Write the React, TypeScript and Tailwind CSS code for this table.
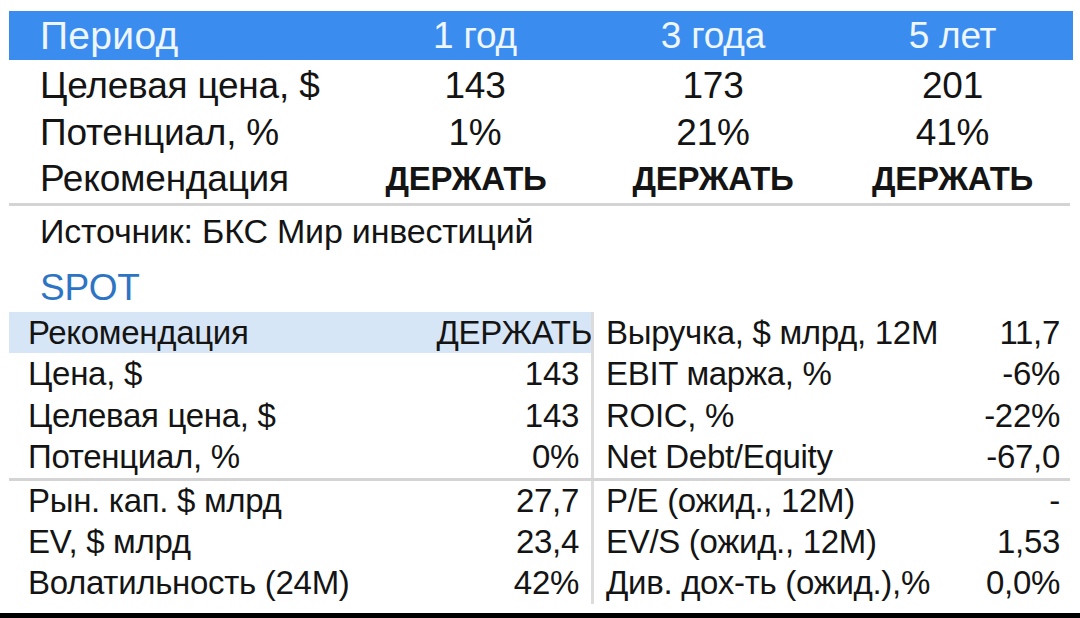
const top = [
  ['Целевая цена, $', '143', '173', '201'],
  ['Потенциал, %', '1%', '21%', '41%'],
];

const upperLeft = [
  ['Цена, $', '143'],
  ['Целевая цена, $', '143'],
  ['Потенциал, %', '0%'],
];

const upperRight = [
  ['Выручка, $ млрд, 12М', '11,7'],
  ['EBIT маржа, %', '-6%'],
  ['ROIC, %', '-22%'],
  ['Net Debt/Equity', '-67,0'],
];

const lowerLeft = [
  ['Рын. кап. $ млрд', '27,7'],
  ['EV, $ млрд', '23,4'],
  ['Волатильность (24М)', '42%'],
];

const lowerRight = [
  ['P/E (ожид., 12М)', '-'],
  ['EV/S (ожид., 12М)', '1,53'],
  ['Див. дох-ть (ожид.),%', '0,0%'],
];

function Row({ label, value, left, h }: { label: string; value: string; left?: boolean; h: string }) {
  return (
    <div className={`flex items-center justify-between ${h} ${left ? 'pl-[19px] pr-[12px]' : 'pl-[12px] pr-[13px]'}`}>
      <span>{label}</span>
      <span>{value}</span>
    </div>
  );
}

export default function App() {
  return (
    <div
      className="flex h-[618px] w-[1080px] flex-col bg-white text-[#141414]"
      style={{ fontFamily: '"Liberation Sans", Arial, sans-serif' }}
    >
      <div className="ml-[9px] mt-[11px] w-[1064px] text-[37px] leading-[40px] tracking-[-0.2px]">
        <div className="grid h-[49px] grid-cols-[347px_238px_238px_1fr] items-center bg-[#3b8cef] text-[#eef6ff]">
          <span className="pl-[31px] text-[39px] tracking-[0.3px]">Период</span>
          <span className="text-center">1 год</span>
          <span className="text-center">3 года</span>
          <span className="text-center">5 лет</span>
        </div>
        <div className="h-[3px]" />
        {top.map((r) => (
          <div key={r[0]} className="grid h-[46.5px] grid-cols-[347px_238px_238px_1fr] items-center">
            <span className="pl-[31px]">{r[0]}</span>
            <span className="text-center">{r[1]}</span>
            <span className="text-center">{r[2]}</span>
            <span className="text-center">{r[3]}</span>
          </div>
        ))}
        <div className="grid h-[46.5px] grid-cols-[347px_238px_238px_1fr] items-center">
          <span className="pl-[31px]">Рекомендация</span>
          <span className="pr-[18px] text-center text-[33px] font-bold tracking-[-0.3px]">ДЕРЖАТЬ</span>
          <span className="text-center text-[33px] font-bold tracking-[-0.3px]">ДЕРЖАТЬ</span>
          <span className="text-center text-[33px] font-bold tracking-[-0.3px]">ДЕРЖАТЬ</span>
        </div>
        <div className="h-[3px] w-[1061px] bg-[#d4d4d4]" />
      </div>

      <div className="ml-[40px] mt-[6px] text-[34px] leading-[38px] tracking-[-0.2px]">Источник: БКС Мир инвестиций</div>
      <div className="ml-[40px] mt-[17px] text-[37px] leading-[42px] tracking-[-0.3px] text-[#2d74c4]">SPOT</div>

      <div className="ml-[9px] mt-[3px] w-[1064px] text-[33px] tracking-[-0.3px]">
        <div className="grid grid-cols-[582px_3px_1fr]">
          <div>
            <div className="flex h-[41.5px] items-center justify-between bg-[#d7e6f6] pl-[19px]">
              <span>Рекомендация</span>
              <span className="-mr-[1px]">ДЕРЖАТЬ</span>
            </div>
            {upperLeft.map((r) => (
              <Row key={r[0]} label={r[0]} value={r[1]} left h="h-[41.5px]" />
            ))}
          </div>
          <div className="bg-[#dcdcdc]" />
          <div>
            {upperRight.map((r) => (
              <Row key={r[0]} label={r[0]} value={r[1]} h="h-[41.5px]" />
            ))}
          </div>
        </div>
        <div className="h-[3px] w-[1061px] bg-[#d4d4d4]" />
        <div className="grid grid-cols-[582px_3px_1fr]">
          <div>
            {lowerLeft.map((r) => (
              <Row key={r[0]} label={r[0]} value={r[1]} left h="h-[41px]" />
            ))}
          </div>
          <div className="bg-[#dcdcdc]" />
          <div>
            {lowerRight.map((r) => (
              <Row key={r[0]} label={r[0]} value={r[1]} h="h-[41px]" />
            ))}
          </div>
        </div>
      </div>

      <div className="mt-auto h-[5px] w-full bg-black" />
    </div>
  );
}
